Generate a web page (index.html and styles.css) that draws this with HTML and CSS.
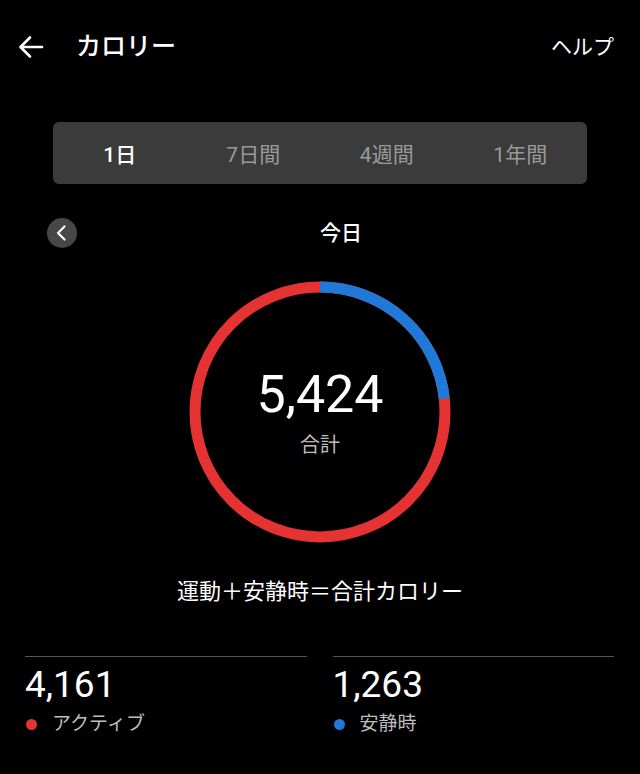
FILE: index.html
```html
<!DOCTYPE html>
<html lang="ja">
<head>
  <meta charset="UTF-8" />
  <meta name="viewport" content="width=device-width, initial-scale=1.0">
  <title>カロリー</title>
  <link rel="stylesheet" href="styles.css">
</head>
<body>
  <header class="topbar">
    <svg class="back" width="28" height="28" viewBox="0 0 28 28">
      <path d="M25 14H4M13 4.5L3.5 14L13 23.5" fill="none" stroke="#fff" stroke-width="2.6" stroke-linecap="round" stroke-linejoin="round"/>
    </svg>
    <h1>カロリー</h1>
    <span class="help">ヘルプ</span>
  </header>

  <div class="tabs">
    <div class="tab active">1日</div>
    <div class="tab">7日間</div>
    <div class="tab">4週間</div>
    <div class="tab">1年間</div>
  </div>

  <div class="daterow">
    <div class="prev">
      <svg width="30" height="30" viewBox="0 0 30 30">
        <path d="M17.5 8.5L11 15L17.5 21.5" fill="none" stroke="#fff" stroke-width="2.2" stroke-linecap="round" stroke-linejoin="round"/>
      </svg>
    </div>
    <div class="date">今日</div>
  </div>

  <div class="ring">
    <svg width="270" height="270" viewBox="0 0 270 270">
      <!-- full circle red, blue arc for resting share (1263 / 5424) -->
      <circle cx="135" cy="135" r="125" fill="none" stroke="#e53333" stroke-width="11"/>
      <circle cx="135" cy="135" r="125" fill="none" stroke="#1f79d8" stroke-width="11"
        stroke-dasharray="182.9 1000" transform="rotate(-90 135 135)"/>
    </svg>
    <div class="ring-text">
      <div class="total">5,424</div>
      <div class="total-label">合計</div>
    </div>
  </div>

  <p class="formula">運動＋安静時＝合計カロリー</p>

  <div class="stats">
    <div class="stat">
      <div class="num">4,161</div>
      <div class="label"><span class="dot red"></span>アクティブ</div>
    </div>
    <div class="stat">
      <div class="num">1,263</div>
      <div class="label"><span class="dot blue"></span>安静時</div>
    </div>
  </div>
</body>
</html>
```

FILE: styles.css
```css
body {
  margin: 0;
  background: #000;
  color: #fff;
  font-family: Roboto, "Noto Sans CJK JP", sans-serif;
}
.topbar {
  display: flex;
  align-items: center;
  height: 94px;
  padding: 0 26px 0 17px;
}
.topbar h1 {
  margin: 0 0 0 31px;
  font-size: 25px;
  font-weight: 500;
  line-height: 30px;
  flex: 1;
}
.help {
  font-size: 21px;
  line-height: 30px;
}
.tabs {
  display: grid;
  grid-template-columns: repeat(4, 1fr);
  margin: 28px 53px 0;
  height: 62px;
  background: #3b3b3b;
  border-radius: 6px;
}
.tab {
  display: flex;
  align-items: center;
  justify-content: center;
  font-size: 21px;
  color: #9a9a9a;
}
.tab.active {
  color: #fff;
  font-weight: 500;
}
.daterow {
  display: flex;
  align-items: center;
  height: 40px;
  margin-top: 29px;
  padding: 0 35px 0 47px;
}
.prev {
  width: 30px;
  height: 30px;
  border-radius: 50%;
  background: #474747;
}
.prev svg {
  display: block;
}
.date {
  flex: 1;
  padding-bottom: 4px;
  text-align: center;
  font-size: 21px;
  font-weight: 500;
}
.ring {
  display: grid;
  justify-content: center;
  margin-top: 24px;
}
.ring svg, .ring-text {
  grid-area: 1 / 1;
}
.ring svg {
  display: block;
}
.ring-text {
  padding-top: 88px;
  text-align: center;
}
.total {
  font-size: 52px;
  line-height: 60px;
}
.total-label {
  margin-top: 6px;
  font-size: 20px;
  line-height: 28px;
  color: #bdbdbd;
}
.formula {
  margin: 30px 0 0;
  text-align: center;
  font-size: 22px;
  line-height: 30px;
}
.stats {
  display: grid;
  grid-template-columns: 1fr 1fr;
  gap: 26px;
  margin-top: 49px;
  padding: 0 26px 0 25px;
}
.stat {
  border-top: 1px solid #555;
  padding-top: 6px;
}
.num {
  font-size: 37px;
  line-height: 44px;
}
.label {
  display: flex;
  align-items: center;
  margin-top: 3px;
  font-size: 19px;
  line-height: 28px;
  color: #bdbdbd;
}
.dot {
  width: 11px;
  height: 11px;
  border-radius: 50%;
  margin: 0 15px 0 1px;
}
.dot.red {
  background: #e53333;
}
.dot.blue {
  background: #1f79d8;
}
```
